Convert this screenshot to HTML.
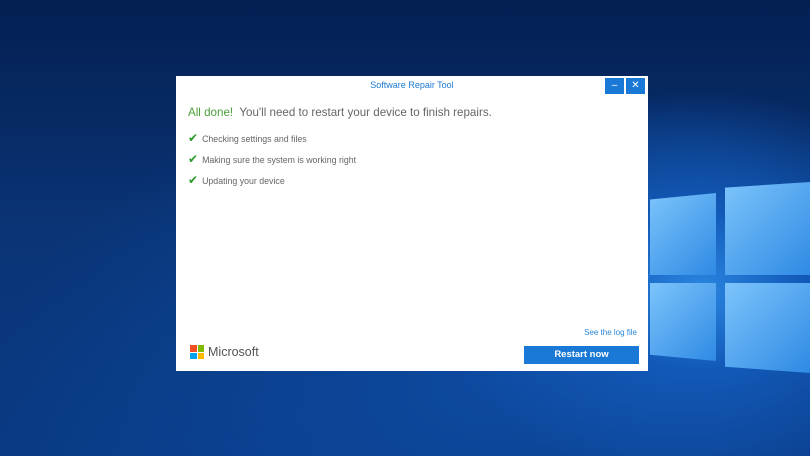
<!DOCTYPE html><html><head><style>
body{margin:0;width:810px;height:456px;overflow:hidden;position:relative;font-family:"Liberation Sans",sans-serif;
background:radial-gradient(ellipse 260px 200px at 700px 290px,#2a86e0 0%,#1259b8 40%,rgba(10,50,120,0) 100%),
radial-gradient(ellipse 500px 300px at 500px 380px,#0d4aa0 0%,rgba(8,40,100,0) 100%),
linear-gradient(180deg,#041f52 0%,#0a3475 50%,#0a3a85 100%);}
.p{position:absolute;background:linear-gradient(135deg,#7cc4fb,#2f8ae4);}
.d{position:absolute;left:176px;top:76px;width:472px;height:295px;background:#fff;}
.t{position:absolute;top:4px;left:0;width:100%;text-align:center;font-size:9px;color:#1a7ad4;}
.b{position:absolute;top:2px;width:19px;height:16px;background:#1a78d6;color:#fff;font-size:10px;text-align:center;line-height:16px}
.h{position:absolute;left:12px;top:30px;font-size:11.6px;color:#666}
.i{position:absolute;left:12px;font-size:8.8px;color:#666}
.i span{color:#2a9a2a;font-size:12px;margin-right:4px}
</style></head><body>
<div class="p" style="left:650px;top:193px;width:66px;height:82px;clip-path:polygon(0 8%,100% 0,100% 100%,0 100%)"></div>
<div class="p" style="left:725px;top:182px;width:85px;height:93px;clip-path:polygon(0 6%,100% 0,100% 100%,0 100%)"></div>
<div class="p" style="left:650px;top:283px;width:66px;height:78px;clip-path:polygon(0 0,100% 0,100% 100%,0 92%)"></div>
<div class="p" style="left:725px;top:283px;width:85px;height:90px;clip-path:polygon(0 0,100% 0,100% 100%,0 93%)"></div>
<div class="d">
<div class="t">Software Repair Tool</div>
<div class="b" style="left:429px">&#8211;</div><div class="b" style="left:450px">✕</div>
<div class="h"><span style="color:#4aa03a">All done!</span>&nbsp; You'll need to restart your device to finish repairs.</div>
<div class="i" style="top:55px"><span>✔</span>Checking settings and files</div>
<div class="i" style="top:76px"><span>✔</span>Making sure the system is working right</div>
<div class="i" style="top:97px"><span>✔</span>Updating your device</div>
<div style="position:absolute;right:11px;top:252px;font-size:8px;color:#2a86d6">See the log file</div>
<div style="position:absolute;left:14px;top:269px;width:14px;height:14px">
<div style="position:absolute;left:0;top:0;width:6.5px;height:6.5px;background:#f25022"></div>
<div style="position:absolute;left:7.5px;top:0;width:6.5px;height:6.5px;background:#7fba00"></div>
<div style="position:absolute;left:0;top:7.5px;width:6.5px;height:6.5px;background:#00a4ef"></div>
<div style="position:absolute;left:7.5px;top:7.5px;width:6.5px;height:6.5px;background:#ffb900"></div></div>
<div style="position:absolute;left:32px;top:269px;font-size:12.5px;color:#555">Microsoft</div>
<div style="position:absolute;left:348px;top:270px;width:115px;height:18px;background:#1a78d6;color:#fff;font-size:9.5px;text-align:center;line-height:18px;font-weight:bold">Restart now</div>
</div>
</body></html>
